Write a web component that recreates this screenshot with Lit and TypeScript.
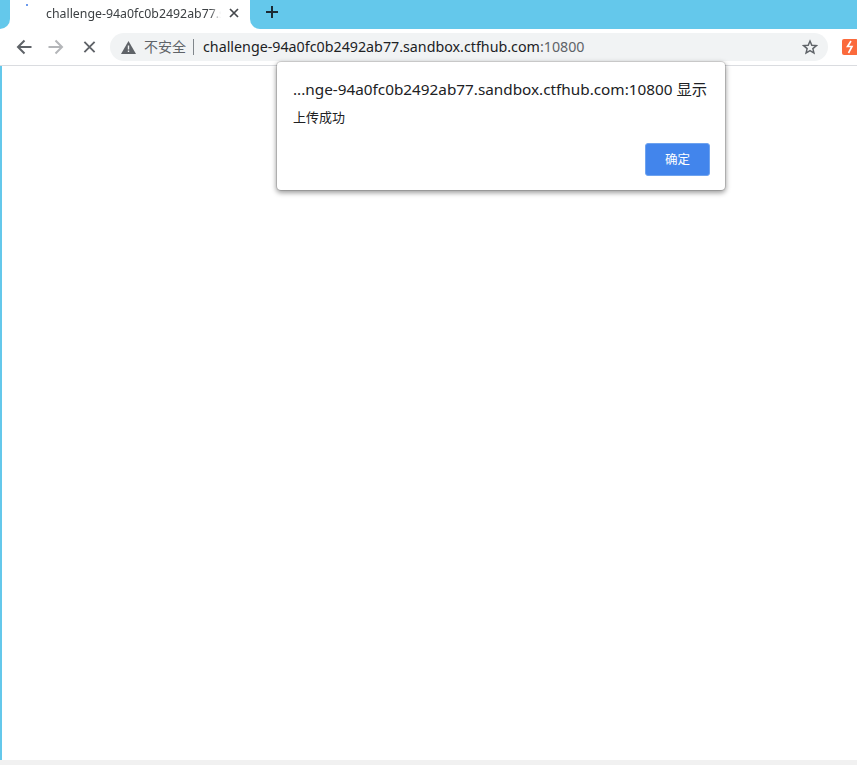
import { LitElement, html, css } from "lit";
import { customElement } from "lit/decorators.js";

@customElement("app-root")
export class AppRoot extends LitElement {
  static styles = css`
    :host {
      display: flex;
      flex-direction: column;
      position: relative;
      width: 857px;
      height: 765px;
      overflow: hidden;
      background: #fff;
      font-family: "Noto Sans", "Noto Sans CJK SC", sans-serif;
      color: #202124;
    }
    .strip { display: flex; height: 29px; flex: none; }
    .cap-l { width: 10px; background: #64c8eb; border-bottom-right-radius: 10px; }
    .cap-r { flex: 1; background: #64c8eb; border-bottom-left-radius: 10px; display: flex; align-items: center; padding-left: 15px; padding-bottom: 5px; }
    .tab { width: 240px; display: flex; align-items: center; position: relative; padding-left: 36px; padding-bottom: 3px; box-sizing: border-box; }
    .dot { position: absolute; left: 16px; top: 4px; width: 2px; height: 2px; border-radius: 50%; background: #3b78e7; }
    .title { width: 178px; overflow: hidden; white-space: nowrap; font-size: 12.35px; color: #3c4043;
      -webkit-mask-image: linear-gradient(to right, #000 164px, transparent 175px); mask-image: linear-gradient(to right, #000 164px, transparent 175px); }
    .tab svg { position: absolute; left: 218px; top: 7px; }
    .toolbar { display: flex; align-items: center; height: 36px; flex: none; border-bottom: 1px solid #dadce0; padding-left: 16px; box-sizing: content-box; }
    .nav { display: flex; align-items: center; gap: 16px; width: 94px; flex: none; }
    .stop { margin-left: 3px; }
    .omni { width: 718px; height: 28px; flex: none; background: #f1f3f4; border-radius: 14px; display: flex; align-items: center; position: relative; box-sizing: border-box; padding-left: 11px; }
    .warn { flex: none; margin-right: 8px; }
    .insecure { font-size: 14px; color: #5f6368; white-space: nowrap; position: relative; top: -1px; }
    .sep { width: 1px; height: 16px; background: #80868b; margin: 0 9px 0 7px; flex: none; }
    .url { font-size: 14.27px; white-space: nowrap; color: #202124; position: relative; top: -1px; }
    .url span { color: #5f6368; }
    .star { position: absolute; left: 692px; top: 6px; }
    .ext { margin-left: 14px; width: 16px; height: 16px; flex: none; background: #fb6a3c; border-radius: 2px; display: flex; align-items: center; justify-content: center; }
    .page { flex: 1; display: flex; background: #fff; }
    .rail { width: 2px; background: #64c8eb; }
    .foot { height: 5px; flex: none; background: #f1f1f1; }
    .dialog { position: absolute; left: 277px; top: 62px; width: 448px; height: 128px; box-sizing: border-box; background: #fff; border-radius: 4px; padding: 15px 16px 15px 16px;
      box-shadow: 0 0 0 1px rgba(0,0,0,0.12), 0 2px 5px 1px rgba(0,0,0,0.38); display: flex; flex-direction: column; }
    .origin { font-size: 15.3px; line-height: 24px; white-space: nowrap; color: #202124; }
    .msg { font-size: 13px; line-height: 18px; margin-top: 7px; color: #202124; }
    .actions { margin-top: auto; display: flex; justify-content: flex-end; }
    .ok { width: 65px; height: 33px; margin-right: -1px; margin-bottom: -1px; background: #4285ec; border: 1px solid #6ea3ef; border-radius: 3px; box-sizing: border-box; color: #fff; font: inherit; font-size: 12.5px; padding: 0 0 2px; }
  `;

  render() {
    return html`
      <div class="strip">
        <div class="cap-l"></div>
        <div class="tab">
          <div class="dot"></div>
          <div class="title">challenge-94a0fc0b2492ab77.sandbox.ctfhub.com:10800</div>
          <svg width="12" height="12" viewBox="0 0 12 12"><path d="M2 2l8 8M10 2l-8 8" stroke="#45484c" stroke-width="1.7" fill="none"/></svg>
        </div>
        <div class="cap-r">
          <svg width="14" height="14" viewBox="0 0 14 14"><path d="M7 1v12M1 7h12" stroke="#1c2a33" stroke-width="2" fill="none"/></svg>
        </div>
      </div>
      <div class="toolbar">
        <div class="nav">
          <svg width="16" height="16" viewBox="0 0 16 16"><path d="M15.500 8H3M8.500 1.500L2 8l6.500 6.500" stroke="#5f6368" stroke-width="2" fill="none"/></svg>
          <svg width="16" height="16" viewBox="0 0 16 16"><path d="M.5 8H13M7.500 1.500L14 8l-6.500 6.500" stroke="#b4b6b9" stroke-width="2" fill="none"/></svg>
          <svg class="stop" width="13" height="14" viewBox="0 0 14 14"><path d="M1.500 1.500l11 11M12.500 1.500l-11 11" stroke="#5f6368" stroke-width="2" fill="none"/></svg>
        </div>
        <div class="omni">
          <svg class="warn" width="15" height="13" viewBox="0 0 15 13"><path d="M7.500 0L15 13H0z" fill="#5f6368"/><path d="M6.800 4.500h1.400v4H6.800zM6.800 9.600h1.400V11H6.800z" fill="#f1f3f4"/></svg>
          <span class="insecure">不安全</span>
          <div class="sep"></div>
          <div class="url">challenge-94a0fc0b2492ab77.sandbox.ctfhub.com<span>:10800</span></div>
          <svg class="star" width="16" height="16" viewBox="0 0 24 24"><path d="M12 3l2.700 6.300 6.800.6-5.200 4.500 1.600 6.700L12 17.500l-5.900 3.600 1.600-6.700L2.500 9.900l6.800-.6z" stroke="#5f6368" stroke-width="2.200" fill="none"/></svg>
        </div>
        <div class="ext">
          <svg width="10" height="14" viewBox="0 0 10 14"><path d="M6 1L2.500 6.500H7L3.500 13" stroke="#fff" stroke-width="1.600" fill="none"/></svg>
        </div>
      </div>
      <div class="page"><div class="rail"></div></div>
      <div class="foot"></div>
      <div class="dialog">
        <div class="origin">...nge-94a0fc0b2492ab77.sandbox.ctfhub.com:10800 显示</div>
        <div class="msg">上传成功</div>
        <div class="actions"><button class="ok">确定</button></div>
      </div>
    `;
  }
}
